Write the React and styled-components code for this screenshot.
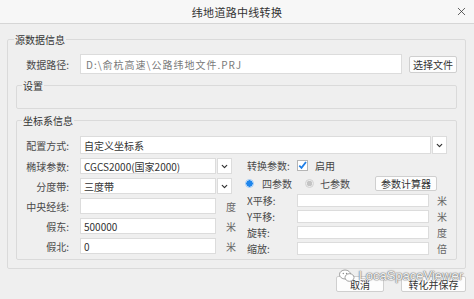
import React from 'react';
import styled, { createGlobalStyle } from 'styled-components';
import { ChevronDown, X } from 'lucide-react';

const Global = createGlobalStyle`
  html, body { margin: 0; padding: 0; background: #efefef; }
  body {
    font-family: "Noto Sans CJK SC", "Noto Sans", sans-serif;
    font-size: 10px;
    color: #444;
  }
  * { box-sizing: border-box; }
`;

const Window = styled.div`
  width: 474px;
  height: 299px;
  display: flex;
  flex-direction: column;
  background: #efefef;
  position: relative;
  overflow: hidden;
`;

const TitleBar = styled.div`
  height: 24px;
  flex: none;
  display: grid;
  grid-template-columns: 1fr auto 1fr;
  align-items: center;
  background: #f7f7f7;
  border-bottom: 1px solid #d6d6d6;
`;

const Title = styled.div`
  grid-column: 2;
  font-size: 11px;
  color: #333;
  letter-spacing: 0.3px;
`;

const Close = styled.div`
  justify-self: end;
  margin-right: 6px;
  display: flex;
  color: #333;
`;

const Body = styled.div`
  flex: 1;
  padding: 9px 8px 0 7px;
  display: flex;
  flex-direction: column;
`;

const Group = styled.fieldset`
  margin: 0;
  min-width: 0;
  border: 1px solid #dadada;
  border-radius: 2px;
  padding: ${p => p.$pad};
  display: flex;
  flex-direction: column;
  gap: ${p => p.$gap || 0}px;
`;

const Legend = styled.legend`
  font-size: 10px;
  line-height: 13px;
  color: #333;
  padding: 0 1px;
  margin-left: ${p => p.$ml}px;
`;

const Row = styled.div`
  display: flex;
  align-items: center;
  height: ${p => p.$h}px;
  flex: none;
`;

const Label = styled.span`
  width: ${p => p.$w}px;
  flex: none;
  text-align: ${p => p.$align || 'right'};
  padding-left: ${p => p.$pl || 0}px;
  margin-right: ${p => p.$mr || 0}px;
  color: #4a4a4a;
  white-space: nowrap;
`;

const Input = styled.div`
  height: 100%;
  flex: ${p => (p.$w ? 'none' : 1)};
  width: ${p => (p.$w ? `${p.$w}px` : 'auto')};
  background: #fff;
  border: 1px solid #dcdcdc;
  display: flex;
  align-items: center;
  padding-left: ${p => p.$pl || 3}px;
  color: ${p => p.$muted ? '#7a7a7a' : '#333'};
  letter-spacing: ${p => p.$ls || 0}px;
  white-space: nowrap;
  overflow: hidden;
`;

const Combo = styled.div`
  display: flex;
  height: 100%;
  gap: 1px;
  flex: ${p => (p.$w ? 'none' : 1)};
  width: ${p => (p.$w ? `${p.$w}px` : 'auto')};
`;

const DropBtn = styled.div`
  width: 15px;
  flex: none;
  background: #fff;
  border: 1px solid #dcdcdc;
  display: flex;
  align-items: center;
  justify-content: center;
  color: #333;
`;

const Unit = styled.span`
  margin-left: ${p => p.$ml}px;
  color: #666;
  flex: none;
`;

const Button = styled.div`
  width: ${p => p.$w}px;
  height: ${p => p.$h}px;
  flex: none;
  margin-left: ${p => p.$ml || 0}px;
  background: #fdfdfd;
  border: 1px solid #cfcfcf;
  border-radius: 2px;
  display: flex;
  align-items: center;
  justify-content: center;
  color: #333;
`;

const Columns = styled.div`
  display: grid;
  grid-template-columns: 228px 1fr;
  flex: none;
`;

const Col = styled.div`
  display: flex;
  flex-direction: column;
  gap: ${p => p.$gap}px;
`;

const Radio = styled.span`
  width: 9px;
  height: 9px;
  border-radius: 50%;
  flex: none;
  margin-right: ${p => p.$mr}px;
  border: 1px solid ${p => (p.$on ? '#9cc8f6' : '#d2d2d2')};
  background: ${p => (p.$on
    ? 'radial-gradient(circle, #1f86ec 0 3px, #e9f3fd 3.5px)'
    : 'radial-gradient(circle, #c4c4c4 0 2.5px, #ececec 3px)')};
`;

const Footer = styled.div`
  display: flex;
  justify-content: flex-end;
  margin-top: 7px;
`;

/* watermark printed over the dialog corner in the screenshot */
const Watermark = styled.div`
  position: absolute;
  right: 11px;
  bottom: 16px;
  display: flex;
  align-items: center;
  gap: 3px;
  pointer-events: none;
  font-family: "Liberation Sans", sans-serif;
  font-size: 13px;
  color: rgba(255, 255, 255, 0.92);
  text-shadow: 0 0 1px #6f6f6f, 0 0 1px #6f6f6f, 0 0 2px #9a9a9a;
`;

function Checkbox() {
  return (
    <svg width="11" height="11" viewBox="0 0 11 11" style={{ marginRight: 7, flex: 'none' }}>
      <rect x="0.5" y="0.5" width="10" height="10" fill="#fff" stroke="#b5b5b5" />
      <path d="M2.3 5.6 L4.5 7.8 L9 2" fill="none" stroke="#1f7ee6" strokeWidth="1.8" />
    </svg>
  );
}

function WeChat() {
  return (
    <svg width="16" height="14" viewBox="0 0 16 14">
      <ellipse cx="6" cy="5.5" rx="5.5" ry="4.5" fill="#fff" stroke="#8a8a8a" strokeWidth="0.8" />
      <ellipse cx="10.5" cy="8.5" rx="4.5" ry="3.8" fill="#fff" stroke="#8a8a8a" strokeWidth="0.8" />
      <circle cx="4.3" cy="4.5" r="0.7" fill="#888" />
      <circle cx="7.6" cy="4.5" r="0.7" fill="#888" />
    </svg>
  );
}

const Chevron = () => <ChevronDown size={9} strokeWidth={3.2} />;

export default function App() {
  return (
    <Window>
      <Global />
      <TitleBar>
        <Title>纬地道路中线转换</Title>
        <Close><X size={13} strokeWidth={1.4} /></Close>
      </TitleBar>
      <Body>
        <Group $pad="8px 8px 8px 8px" $gap={5}>
          <Legend $ml={-2}>源数据信息</Legend>
          <Row $h={20}>
            <Label $w={53} $mr={11}>数据路径:</Label>
            <Input $muted $ls={1} $pl={5}>D:\俞杭高速\公路纬地文件.PRJ</Input>
            <Button $w={48} $h={17} $ml={7}>选择文件</Button>
          </Row>
          <Group $pad="0 0 16px 0">
            <Legend $ml={5}>设置</Legend>
          </Group>
          <Group $pad="9px 9px 4px 0" $gap={4}>
            <Legend $ml={5}>坐标系信息</Legend>
            <Row $h={18}>
              <Label $w={52} $mr={11}>配置方式:</Label>
              <Combo>
                <Input>自定义坐标系</Input>
                <DropBtn><Chevron /></DropBtn>
              </Combo>
            </Row>
            <Columns>
              <Col $gap={4}>
                <Row $h={16}>
                  <Label $w={52} $mr={11}>椭球参数:</Label>
                  <Combo $w={152}>
                    <Input>CGCS2000(国家2000)</Input>
                    <DropBtn><Chevron /></DropBtn>
                  </Combo>
                </Row>
                <Row $h={16}>
                  <Label $w={52} $mr={11}>分度带:</Label>
                  <Combo $w={152}>
                    <Input>三度带</Input>
                    <DropBtn><Chevron /></DropBtn>
                  </Combo>
                </Row>
                <Row $h={16}>
                  <Label $w={52} $mr={11}>中央经线:</Label>
                  <Input $w={136} />
                  <Unit $ml={10}>度</Unit>
                </Row>
                <Row $h={16}>
                  <Label $w={52} $mr={11}>假东:</Label>
                  <Input $w={136}>500000</Input>
                  <Unit $ml={10}>米</Unit>
                </Row>
                <Row $h={16}>
                  <Label $w={52} $mr={11}>假北:</Label>
                  <Input $w={136}>0</Input>
                  <Unit $ml={10}>米</Unit>
                </Row>
              </Col>
              <Col $gap={3}>
                <Row $h={15}>
                  <Label $w={52} $align="left" $pl={2}>转换参数:</Label>
                  <Checkbox />
                  <span>启用</span>
                </Row>
                <Row $h={15}>
                  <Radio $on $mr={8} />
                  <Label $w={43} $align="left">四参数</Label>
                  <Radio $mr={6} />
                  <Label $w={55} $align="left">七参数</Label>
                  <Button $w={62} $h={15}>参数计算器</Button>
                </Row>
                <Row $h={13}>
                  <Label $w={52} $align="left" $pl={2}>X平移:</Label>
                  <Input />
                  <Unit $ml={8}>米</Unit>
                </Row>
                <Row $h={13}>
                  <Label $w={52} $align="left" $pl={2}>Y平移:</Label>
                  <Input />
                  <Unit $ml={8}>米</Unit>
                </Row>
                <Row $h={13}>
                  <Label $w={52} $align="left" $pl={2}>旋转:</Label>
                  <Input />
                  <Unit $ml={8}>度</Unit>
                </Row>
                <Row $h={13}>
                  <Label $w={52} $align="left" $pl={2}>缩放:</Label>
                  <Input />
                  <Unit $ml={8}>倍</Unit>
                </Row>
              </Col>
            </Columns>
          </Group>
        </Group>
        <Footer>
          <Button $w={48} $h={16}>取消</Button>
          <Button $w={65} $h={16} $ml={17}>转化并保存</Button>
        </Footer>
      </Body>
      <Watermark>
        <WeChat />
        <span>LocaSpaceViewer</span>
      </Watermark>
    </Window>
  );
}
